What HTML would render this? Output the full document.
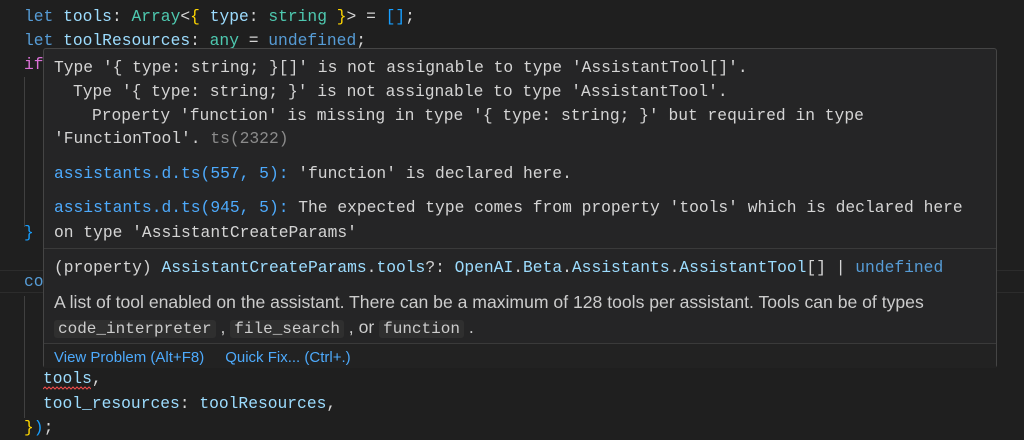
<!DOCTYPE html>
<html><head><meta charset="utf-8"><style>
body{margin:0;width:1024px;height:440px;background:#1f1f1f;overflow:hidden;position:relative;font-family:"Liberation Mono",monospace;}
.m{position:absolute;font-family:"Liberation Mono",monospace;font-size:16.3px;white-space:pre;color:#d4d4d4;line-height:20px;}
.s{position:absolute;font-family:"Liberation Sans",sans-serif;font-size:17.6px;white-space:pre;color:#cccccc;line-height:20px;}
.k{color:#569cd6}.v{color:#9cdcfe}.t{color:#4ec9b0}.y{color:#ffd700}.p{color:#da70d6}.b{color:#179fff}.g{color:#8b8b8b}.c{color:#4daafc}
#hov{position:absolute;left:43px;top:48px;width:954px;height:320px;background:#252526;border:1px solid #454545;border-radius:3px;box-sizing:border-box;}
.code{background:#2f2f2f;border-radius:3px;padding:0 4px;font-family:"Liberation Mono",monospace;font-size:16px;}
</style></head><body>
<div style="position:absolute;left:24px;top:77px;width:1px;height:150px;background:#404040"></div>
<div style="position:absolute;left:24px;top:296px;width:1px;height:122px;background:#404040"></div>
<div style="position:absolute;left:0;top:270px;width:1024px;height:1px;background:#2c2c2c"></div>
<div style="position:absolute;left:0;top:292px;width:1024px;height:1px;background:#2c2c2c"></div>
<div class="m" style="left:24px;top:7px"><span class="k">let</span> <span class="v">tools</span>: <span class="t">Array</span>&lt;<span class="y">{</span> <span class="v">type</span>: <span class="t">string</span> <span class="y">}</span>&gt; = <span class="b">[]</span>;</div>
<div class="m" style="left:24px;top:31px"><span class="k">let</span> <span class="v">toolResources</span>: <span class="t">any</span> = <span class="k">undefined</span>;</div>
<div class="m" style="left:24px;top:55px"><span class="p">if</span></div>
<div class="m" style="left:24px;top:223px"><span class="b">}</span></div>
<div class="m" style="left:24px;top:272px"><span class="k">co</span></div>
<div class="m" style="left:43px;top:369px"><span class="v">tools</span>,</div>
<svg style="position:absolute;left:43px;top:386px" width="48" height="4"><path d="M0 3 L2 1 L4 3 L6 1 L8 3 L10 1 L12 3 L14 1 L16 3 L18 1 L20 3 L22 1 L24 3 L26 1 L28 3 L30 1 L32 3 L34 1 L36 3 L38 1 L40 3 L42 1 L44 3 L46 1 L48 3" stroke="#f14c4c" fill="none" stroke-width="1"/></svg>
<div class="m" style="left:43px;top:394px"><span class="v">tool_resources</span>: <span class="v">toolResources</span>,</div>
<div class="m" style="left:24px;top:418px"><span class="y">}</span><span class="b">)</span>;</div>
<div id="hov">
<div class="m" style="left:10px;top:9px">Type '{ type: string; }[]' is not assignable to type 'AssistantTool[]'.</div>
<div class="m" style="left:29px;top:33px">Type '{ type: string; }' is not assignable to type 'AssistantTool'.</div>
<div class="m" style="left:48px;top:57px">Property 'function' is missing in type '{ type: string; }' but required in type</div>
<div class="m" style="left:10px;top:80px">'FunctionTool'. <span class="g">ts(2322)</span></div>
<div class="m" style="left:10px;top:115px"><span class="c">assistants.d.ts(557, 5):</span> 'function' is declared here.</div>
<div class="m" style="left:10px;top:149px"><span class="c">assistants.d.ts(945, 5):</span> The expected type comes from property 'tools' which is declared here</div>
<div class="m" style="left:10px;top:174px">on type 'AssistantCreateParams'</div>
<div style="position:absolute;left:0;top:199px;width:952px;height:1px;background:#3a3a3a"></div>
<div class="m" style="left:10px;top:209px">(property) <span class="v">AssistantCreateParams</span>.<span class="v">tools</span>?: <span class="v">OpenAI</span>.<span class="v">Beta</span>.<span class="v">Assistants</span>.<span class="v">AssistantTool</span>[] | <span class="k">undefined</span></div>
<div class="s" style="left:10px;top:243px">A list of tool enabled on the assistant. There can be a maximum of 128 tools per assistant. Tools can be of types</div>
<div class="s" style="left:10px;top:268px"><span class="code">code_interpreter</span> , <span class="code">file_search</span> , or <span class="code">function</span> .</div>
<div style="position:absolute;left:0;top:294px;width:952px;height:24px;background:#222222;border-top:1px solid #3a3a3a"></div>
<div class="s" style="left:10px;top:299px;font-size:15px;color:#4daafc">View Problem (Alt+F8)<span style="display:inline-block;width:21px"></span>Quick Fix... (Ctrl+.)</div>
</div>
</body></html>
